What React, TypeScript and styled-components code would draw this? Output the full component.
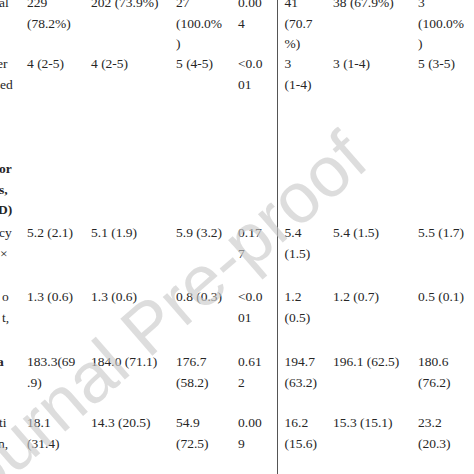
import React from "react";
import styled, { createGlobalStyle } from "styled-components";

const Global = createGlobalStyle`
  html, body { margin: 0; padding: 0; background: #ffffff; overflow: hidden; }
  #root { width: 474px; height: 474px; overflow: hidden; }
`;

const Page = styled.div`
  position: relative;
  width: 474px;
  height: 474px;
  overflow: hidden;
  background: #ffffff;
  font-family: "Liberation Serif", "Times New Roman", serif;
  font-size: 13.5px;
  line-height: 20.5px;
  color: #262626;
`;

const Table = styled.div`
  display: flex;
  flex-direction: column;
  margin-top: -7px;
`;

const Row = styled.div<{ $h: number }>`
  display: grid;
  grid-template-columns: 27px 64px 85px 62px 39px 56px 85px 56px;
  height: ${(p) => p.$h}px;
`;

const Cell = styled.div<{ $divider?: boolean }>`
  white-space: nowrap;
  box-sizing: border-box;
  ${(p) =>
    p.$divider
      ? `border-left: 1.5px solid #555555; padding-left: 6.5px;`
      : ``}
`;

const LabelCell = styled.div<{ $bold?: boolean }>`
  white-space: nowrap;
  font-weight: ${(p) => (p.$bold ? 700 : 400)};
`;

const Line = styled.span`
  display: block;
`;

const Frag = styled.span<{ $shift: number }>`
  display: block;
  margin-left: ${(p) => p.$shift}px;
`;

const Watermark = styled.div`
  position: absolute;
  left: -82px;
  top: 480px;
  transform-origin: 0 0;
  transform: rotate(-41deg);
  font-family: "Liberation Sans", Arial, sans-serif;
  font-size: 71px;
  line-height: 1;
  white-space: nowrap;
  color: rgba(200, 200, 200, 0.62);
  pointer-events: none;
`;

type Frg = [string, number];
type RowData = {
  h: number;
  bold?: boolean;
  label: Frg[];
  cells: string[][];
};

const rows: RowData[] = [
  {
    h: 61,
    label: [["al", -1]],
    cells: [
      ["229", "(78.2%)"],
      ["202 (73.9%)"],
      ["27", "(100.0%", ")"],
      ["0.00", "4"],
      ["41", "(70.7", "%)"],
      ["38 (67.9%)"],
      ["3", "(100.0%", ")"],
    ],
  },
  {
    h: 105,
    label: [
      ["er", -3],
      ["ed", 0],
    ],
    cells: [
      ["4 (2-5)"],
      ["4 (2-5)"],
      ["5 (4-5)"],
      ["<0.0", "01"],
      ["3", "(1-4)"],
      ["3 (1-4)"],
      ["5 (3-5)"],
    ],
  },
  {
    h: 64,
    bold: true,
    label: [
      ["or", -1],
      ["s,", -1],
      ["D)", -2],
    ],
    cells: [[], [], [], [], [], [], []],
  },
  {
    h: 64,
    label: [
      ["cy", -1],
      ["×", 0],
    ],
    cells: [
      ["5.2 (2.1)"],
      ["5.1 (1.9)"],
      ["5.9 (3.2)"],
      ["0.17", "7"],
      ["5.4", "(1.5)"],
      ["5.4 (1.5)"],
      ["5.5 (1.7)"],
    ],
  },
  {
    h: 65,
    label: [
      ["o", 2],
      ["t,", 2],
    ],
    cells: [
      ["1.3 (0.6)"],
      ["1.3 (0.6)"],
      ["0.8 (0.3)"],
      ["<0.0", "01"],
      ["1.2", "(0.5)"],
      ["1.2 (0.7)"],
      ["0.5 (0.1)"],
    ],
  },
  {
    h: 61,
    bold: true,
    label: [["a", -3]],
    cells: [
      ["183.3(69", ".9)"],
      ["184.0 (71.1)"],
      ["176.7", "(58.2)"],
      ["0.61", "2"],
      ["194.7", "(63.2)"],
      ["196.1 (62.5)"],
      ["180.6", "(76.2)"],
    ],
  },
  {
    h: 90,
    label: [
      ["ti", -1],
      ["n,", -2],
    ],
    cells: [
      ["18.1", "(31.4)"],
      ["14.3 (20.5)"],
      ["54.9", "(72.5)"],
      ["0.00", "9"],
      ["16.2", "(15.6)"],
      ["15.3 (15.1)"],
      ["23.2", "(20.3)"],
    ],
  },
];

export default function App() {
  return (
    <>
      <Global />
      <Page>
        <Table>
          {rows.map((r, i) => (
            <Row key={i} $h={r.h}>
              <LabelCell $bold={r.bold}>
                {r.label.map(([t, s], j) => (
                  <Frag key={j} $shift={s}>
                    {t}
                  </Frag>
                ))}
              </LabelCell>
              {r.cells.map((lines, c) => (
                <Cell key={c} $divider={c === 4}>
                  {lines.map((l, k) => (
                    <Line key={k}>{l}</Line>
                  ))}
                </Cell>
              ))}
            </Row>
          ))}
        </Table>
        <Watermark>Journal Pre-proof</Watermark>
      </Page>
    </>
  );
}
